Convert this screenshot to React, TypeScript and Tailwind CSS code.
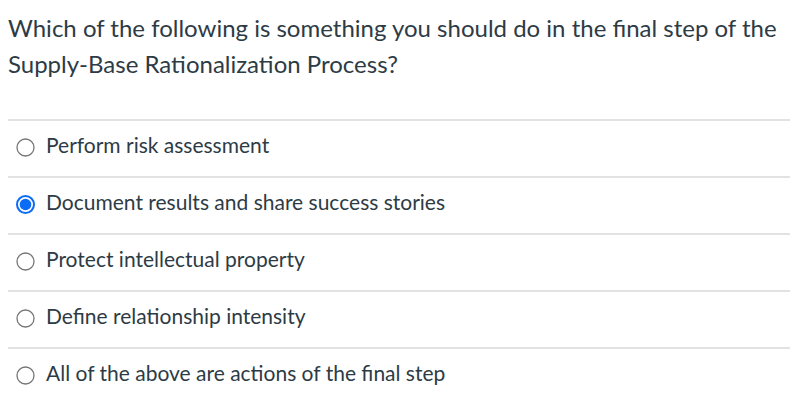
import React from 'react';

const options = [
  'Perform risk assessment',
  'Document results and share success stories',
  'Protect intellectual property',
  'Define relationship intensity',
  'All of the above are actions of the final step',
];

const Radio = ({ checked }: { checked: boolean }) =>
  checked ? (
    <svg width="19" height="19" viewBox="0 0 19 19" className="shrink-0">
      <circle cx="9.5" cy="9.5" r="8.5" fill="#fff" stroke="#0b6cf5" strokeWidth="2" />
      <circle cx="9.5" cy="9.5" r="5.8" fill="#0b6cf5" />
    </svg>
  ) : (
    <svg width="19" height="19" viewBox="0 0 19 19" className="shrink-0">
      <circle cx="9.5" cy="9.5" r="8.5" fill="#fff" stroke="#767676" strokeWidth="1.3" />
    </svg>
  );

export default function App() {
  const selected = 1;
  return (
    <div className="w-[790px] h-[403px] bg-white text-[#2d3b45] font-['Lato','Noto_Sans',sans-serif] overflow-hidden">
      <div className="pl-2 pt-[10px] text-[24px] leading-[36px]">
        Which of the following is something you should do in the final step of the Supply-Base Rationalization Process?
      </div>
      <div className="mt-[37px] ml-2">
        {options.map((opt, i) => (
          <div key={i} className="flex items-center h-[57px] border-t-2 border-[#e2e2e2] pb-[8px]">
            <div className="ml-2 mr-[11px] pt-[5px]">
              <Radio checked={i === selected} />
            </div>
            <span className="text-[21px]">{opt}</span>
          </div>
        ))}
      </div>
    </div>
  );
}
